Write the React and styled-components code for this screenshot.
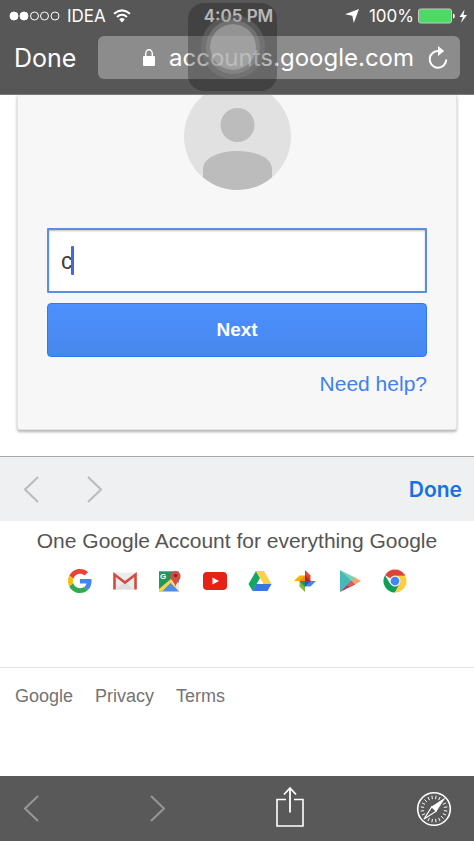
import React, { useState } from "react";
import styled, { createGlobalStyle } from "styled-components";

const system = `Inter, "Liberation Sans", sans-serif`;
const arial = `"Liberation Sans", Arial, sans-serif`;

const Chevron = ({ right }) => (
  <svg width="15" height="27" viewBox="0 0 15 27" fill="none" stroke="currentColor" strokeWidth="2">
    <path d={right ? "M1 1L14 13.500L1 26" : "M14 1L1 13.500L14 26"} />
  </svg>
);

const StatusBar = () => (
  <Status>
    <StatusGroup>
      <svg width="51" height="10" viewBox="0 0 51 10" fill="none" stroke="#fff">
        <circle cx="5" cy="5" r="4" fill="#fff" />
        <circle cx="15" cy="5" r="4" fill="#fff" />
        <circle cx="25.5" cy="5" r="4" />
        <circle cx="35.5" cy="5" r="4" />
        <circle cx="46" cy="5" r="4" />
      </svg>
      <span>IDEA</span>
      <WifiIcon />
    </StatusGroup>
    <Clock>4:05 PM</Clock>
    <StatusGroup $end>
      <svg width="20" height="14" viewBox="0 0 20 14" fill="#fff">
        <path d="M14 0L8.800 14L7.300 6.700L0 5.300z" />
      </svg>
      <span>100%</span>
      <svg width="50" height="16" viewBox="0 0 50 16">
        <rect x="0.5" y="1" width="33" height="14" rx="2" fill="#4cd964" stroke="#c9c9c9" />
        <path d="M35 5.5q1.8 0 1.8 2.5t-1.8 2.5z" fill="#fff" />
        <path d="M46.5 1.5L41.5 9h3.4l-2 6L49 7h-3.5z" fill="#fff" />
      </svg>
    </StatusGroup>
  </Status>
);

const WifiIcon = () => (
  <svg width="18" height="14" viewBox="0 0 18 14" fill="none" stroke="#fff" strokeWidth="2">
    <path d="M1 4.8Q9-2 17 4.8" />
    <path d="M4 8Q9 3.6 14 8" />
    <path d="M6.2 10.4Q9 7.8 11.8 10.4L9 13.4z" fill="#fff" stroke="none" />
  </svg>
);

const LockIcon = () => (
  <svg width="12" height="17" viewBox="0 0 12 17">
    <path d="M2.7 8V4.4a3.3 3.6 0 0 1 6.6 0V8" fill="none" stroke="#fff" strokeWidth="1.4" />
    <rect y="7" width="12" height="10" rx="1" fill="#fff" />
  </svg>
);

const ReloadIcon = () => (
  <svg width="20" height="24" viewBox="0 0 20 24">
    <path d="M11.5 5.2A8.3 8.3 0 1 0 18.3 13.5" fill="none" stroke="#fff" strokeWidth="2" />
    <path d="M10 0L16.2 5L10 10z" fill="#fff" />
  </svg>
);

const Avatar = () => (
  <svg width="107" height="95" viewBox="0 12 107 95">
    <clipPath id="face">
      <circle cx="53.5" cy="53.5" r="53.5" />
    </clipPath>
    <g clipPath="url(#face)">
      <rect width="107" height="107" fill="#e1e1e1" />
      <circle cx="53.5" cy="42" r="17" fill="#bcbcbc" />
      <path d="M19 107V86C19 75 35 68 53.500 68S88 75 88 86v21z" fill="#bcbcbc" />
    </g>
  </svg>
);

const ShareIcon = () => (
  <svg width="30" height="46" viewBox="0 0 30 46" fill="none" stroke="#fff" strokeWidth="1.800">
    <path d="M11 13.500H2V40H28V13.500H19" strokeWidth="1.600" />
    <path d="M15 26.500V2.500M9 8.500L15 2L21 8.500" />
  </svg>
);

const CompassIcon = () => (
  <svg width="36" height="36" viewBox="0 0 36 36" fill="none" stroke="#fff">
    <circle cx="18" cy="18" r="16.300" strokeWidth="1.600" />
    {Array.from({ length: 20 }, (_, i) => (
      <path key={i} d="M18 4.500V8" transform={`rotate(${i * 18 + 9} 18 18)`} strokeWidth="0.900" />
    ))}
    <path d="M28.500 7.500L20.200 20.200L15.800 15.800z" fill="#fff" strokeWidth="0.800" />
    <path d="M8 28L15.800 15.800L20.200 20.200z" fill="#595959" strokeWidth="1.200" />
  </svg>
);

const products = [
  {
    name: "Google",
    box: "0 0 48 48",
    art: (
      <>
        <path fill="#ea4335" d="M24 9.500c3.540 0 6.710 1.220 9.210 3.600l6.850-6.850C35.900 2.380 30.470 0 24 0 14.620 0 6.510 5.380 2.560 13.220l7.980 6.190C12.430 13.720 17.740 9.500 24 9.500z" />
        <path fill="#4285f4" d="M46.980 24.550c0-1.570-.15-3.090-.38-4.550H24v9.020h12.940c-.58 2.960-2.260 5.480-4.780 7.180l7.730 6c4.510-4.180 7.090-10.360 7.090-17.650z" />
        <path fill="#fbbc05" d="M10.530 28.590c-.48-1.450-.76-2.990-.76-4.590s.27-3.140.76-4.590l-7.980-6.190C.92 16.460 0 20.120 0 24c0 3.880.92 7.540 2.560 10.780l7.970-6.190z" />
        <path fill="#34a853" d="M24 48c6.480 0 11.930-2.130 15.890-5.810l-7.730-6c-2.150 1.450-4.920 2.300-8.160 2.300-6.260 0-11.570-4.220-13.470-9.910l-7.980 6.190C6.510 42.620 14.620 48 24 48z" />
      </>
    ),
  },
  {
    name: "Gmail",
    art: (
      <>
        <rect x="0" y="3.500" width="24" height="17" rx="1.500" fill="#ececec" />
        <path d="M3 20.500L12 12.500L21 20.500" fill="#dedede" />
        <path d="M1.500 20.500V5.500L12 13.500L22.500 5.500V20.500" fill="none" stroke="#d54b40" strokeWidth="2.600" />
      </>
    ),
  },
  {
    name: "Maps",
    art: (
      <>
        <path d="M1 2.500h20v20H1z" fill="#4b8df0" />
        <path d="M1 2.500h17v4L1 21.500z" fill="#27955a" />
        <path d="M1 20L14 9L21 17V22.500L12.500 14L4 22.500H1z" fill="#f8d34b" />
        <path d="M13 12L16 9L21 14V22z" fill="#e8e8e8" />
        <text x="2" y="10" fontSize="8" fontWeight="700" fill="#fff" fontFamily="Liberation Sans, sans-serif">G</text>
        <path d="M17.500 18c-.5-5-5-6-5-11a5 5 0 0 1 10 0c0 5-4.500 6-5 11z" fill="#dc4b3e" />
        <circle cx="17.500" cy="6.500" r="1.800" fill="#8c2820" />
      </>
    ),
  },
  {
    name: "YouTube",
    art: (
      <>
        <rect x="0" y="3" width="24" height="18" rx="4" fill="#e62117" />
        <path d="M9.500 8.500L16 12L9.500 15.500z" fill="#fff" />
      </>
    ),
  },
  {
    name: "Drive",
    art: (
      <>
        <path d="M8 2L12 9L4.500 22L0.500 15z" fill="#11a861" />
        <path d="M8 2H16L23.500 15H15.500z" fill="#ffcf48" />
        <path d="M8.300 15H23.500L19.500 22H4.500z" fill="#3777e3" />
      </>
    ),
  },
  {
    name: "Photos",
    art: (
      <>
        <path d="M12 1L17.500 6.500V12H12z" fill="#db4437" />
        <path d="M12 6L17.500 12H12z" fill="#a52a22" />
        <path d="M23 12L17.500 17.500H12V12z" fill="#4285f4" />
        <path d="M18 12L12 17.500V12z" fill="#2a56c6" />
        <path d="M12 23L6.500 17.500V12H12z" fill="#7fb83d" />
        <path d="M12 18L6.500 12H12z" fill="#0f9d58" />
        <path d="M1 12L6.500 6.500H12V12z" fill="#f4b400" />
        <path d="M6 12L12 6.500V12z" fill="#ef8b22" />
      </>
    ),
  },
  {
    name: "Play",
    art: (
      <>
        <path d="M2 1L15 12L2 23z" fill="#45b8ba" />
        <path d="M2 1L18 9L14 12.500z" fill="#7ccfb4" />
        <path d="M17 8.500L23 12L17 15.500L13.500 12z" fill="#f3a66b" />
        <path d="M2 23L13.500 12L17 15.500z" fill="#bd3358" />
        <path d="M9 16.300L13.500 12L17 15.500L12 18z" fill="#df5c5d" />
      </>
    ),
  },
  {
    name: "Chrome",
    art: (
      <>
        <path d="M2.040 6.250A11.500 11.500 0 0 1 21.960 6.250L12 12z" fill="#db4437" />
        <path d="M2.040 6.250A11.500 11.500 0 0 0 12 23.500L16.800 14.800L12 12L7.200 14.800z" fill="#0f9d58" />
        <path d="M21.960 6.250A11.500 11.500 0 0 1 12 23.500L16.800 14.800L12 6.500z" fill="#ffcd40" />
        <path d="M12 6.500H22.100L21.300 5H8z" fill="#db4437" />
        <circle cx="12" cy="12" r="5.500" fill="#f1f1f1" />
        <circle cx="12" cy="12" r="4.300" fill="#4285f4" />
      </>
    ),
  },
];

const App = () => {
  const [email, setEmail] = useState("c");
  return (
    <Page>
      <GlobalStyle />
      <Header>
        <StatusBar />
        <AddressRow>
          <PlainButton>Done</PlainButton>
          <Address>
            <LockIcon />
            <span>accounts.google.com</span>
            <IconButton aria-label="Reload">
              <ReloadIcon />
            </IconButton>
          </Address>
        </AddressRow>
        <TouchButton aria-label="AssistiveTouch">
          <span />
        </TouchButton>
      </Header>

      <Card onSubmit={(e) => e.preventDefault()}>
        <Avatar />
        <Field>
          <input
            aria-label="Email or phone"
            value={email}
            onChange={(e) => setEmail(e.target.value)}
          />
          {email === "c" && <Caret />}
        </Field>
        <NextButton type="submit">Next</NextButton>
        <HelpLink href="#help">Need help?</HelpLink>
      </Card>

      <FormBar>
        <IconButton aria-label="Previous field">
          <Chevron />
        </IconButton>
        <IconButton aria-label="Next field">
          <Chevron right />
        </IconButton>
        <DoneButton>Done</DoneButton>
      </FormBar>

      <Tagline>One Google Account for everything Google</Tagline>
      <Products>
        {products.map(({ name, box, art }) => (
          <svg key={name} role="img" aria-label={name} width="24" height="24" viewBox={box || "0 0 24 24"}>
            {art}
          </svg>
        ))}
      </Products>

      <Footer>
        <a href="#google">Google</a>
        <a href="#privacy">Privacy</a>
        <a href="#terms">Terms</a>
      </Footer>

      <Toolbar>
        <IconButton aria-label="Back" $dim>
          <Chevron />
        </IconButton>
        <IconButton aria-label="Forward" $dim>
          <Chevron right />
        </IconButton>
        <IconButton aria-label="Share">
          <ShareIcon />
        </IconButton>
        <IconButton aria-label="Open in Safari">
          <CompassIcon />
        </IconButton>
      </Toolbar>
    </Page>
  );
};

export default App;

const GlobalStyle = createGlobalStyle`
  * {
    box-sizing: border-box;
  }
  body {
    margin: 0;
    background: #fff;
  }
  button {
    margin: 0;
    padding: 0;
    border: 0;
    background: none;
    cursor: pointer;
  }
  svg {
    display: block;
    flex-shrink: 0;
  }
  a {
    text-decoration: none;
  }
`;
const Page = styled.div`
  display: flex;
  flex-direction: column;
  min-height: 100vh;
  font-family: ${arial};
`;
const Header = styled.header`
  position: relative;
  height: 95px;
  color: #fff;
  background: #575757;
  border-bottom: 1px solid #7b7b7b;
  font-family: ${system};
`;
const Status = styled.div`
  display: grid;
  grid-template-columns: 1fr auto 1fr;
  align-items: center;
  height: 32px;
  padding: 0 6px 0 9px;
  font-size: 17px;
  line-height: 20px;
`;
const StatusGroup = styled.div`
  display: flex;
  align-items: center;
  justify-content: ${({ $end }) => ($end ? "flex-end" : "flex-start")};
  gap: ${({ $end }) => ($end ? "4px" : "7px")};
`;
const Clock = styled.time`
  font-weight: 600;
`;
const AddressRow = styled.div`
  display: flex;
  align-items: center;
  gap: 22px;
  padding: 4px 14px;
`;
const PlainButton = styled.button`
  color: #fff;
  font-family: ${system};
  font-size: 25px;
  line-height: 32px;
`;
const Address = styled.div`
  display: flex;
  flex: 1;
  align-items: center;
  justify-content: flex-end;
  gap: 14px;
  height: 43px;
  padding-right: 12px;
  border-radius: 6px;
  background: #8c8c8c;
  font-size: 24px;
`;
const IconButton = styled.button`
  color: ${({ $dim }) => ($dim ? "#969696" : "#b9bbbe")};
`;
const TouchButton = styled.button`
  position: absolute;
  top: 3px;
  left: calc(50% - 49px);
  display: grid;
  place-items: center;
  width: 89px;
  height: 88px;
  border-radius: 16px;
  background: rgba(20, 20, 20, 0.3);
  span {
    width: 46px;
    height: 46px;
    border-radius: 50%;
    background: rgba(190, 190, 190, 0.65);
    box-shadow: 0 0 0 4px rgba(160, 160, 160, 0.35), 0 0 0 9px rgba(140, 140, 140, 0.3);
  }
`;
const Card = styled.form`
  display: flex;
  flex-direction: column;
  align-items: center;
  margin: 0 17px 26px;
  padding: 0 29px 32px;
  border: 1px solid #e4e4e4;
  border-top: 0;
  border-radius: 0 0 3px 3px;
  background: #f7f7f7;
  box-shadow: 0 2px 3px rgba(0, 0, 0, 0.3);
`;
const Field = styled.div`
  position: relative;
  width: 100%;
  margin-top: 38px;
  input {
    display: block;
    width: 100%;
    height: 65px;
    padding: 2px 12px 0;
    border: 2px solid #5a8ee6;
    border-radius: 1px;
    outline: 0;
    background: #fff;
    box-shadow: inset 0 1px 2px rgba(0, 0, 0, 0.25);
    color: #404040;
    font-family: ${arial};
    font-size: 23px;
  }
`;
const Caret = styled.span`
  position: absolute;
  top: 18px;
  left: 24px;
  width: 3px;
  height: 29px;
  border-radius: 1px;
  background: #4466e0;
`;
const NextButton = styled.button`
  width: 100%;
  height: 54px;
  margin: 10px 0 14px;
  border: 1px solid #3079ed;
  border-radius: 4px;
  background: linear-gradient(#4d90fe, #4787ed);
  color: #fff;
  font-family: ${arial};
  font-size: 19px;
  font-weight: 700;
`;
const HelpLink = styled.a`
  align-self: flex-end;
  color: #427fed;
  font-size: 21px;
  line-height: 26px;
`;
const FormBar = styled.div`
  display: flex;
  align-items: center;
  gap: 48px;
  height: 65px;
  padding: 0 12px 0 24px;
  border-top: 1px solid #a6a8aa;
  background: #eff0f2;
`;
const DoneButton = styled.button`
  margin-left: auto;
  color: #1473e0;
  font-family: ${system};
  font-size: 21px;
  font-weight: 600;
`;
const Tagline = styled.p`
  margin: 8px 0 0;
  color: #555;
  font-size: 21px;
  line-height: 24px;
  text-align: center;
`;
const Products = styled.div`
  display: flex;
  justify-content: center;
  gap: 21px;
  margin-top: 16px;
`;
const Footer = styled.footer`
  display: flex;
  gap: 22px;
  margin: 74px 0 65px;
  padding: 17px 15px 0;
  border-top: 1px solid #e2e2e2;
  font-size: 18px;
  line-height: 22px;
  a {
    color: #737373;
  }
`;
const Toolbar = styled.nav`
  display: flex;
  align-items: center;
  justify-content: space-between;
  height: 65px;
  margin-top: auto;
  padding: 0 22px 0 24px;
  background: #595959;
`;
